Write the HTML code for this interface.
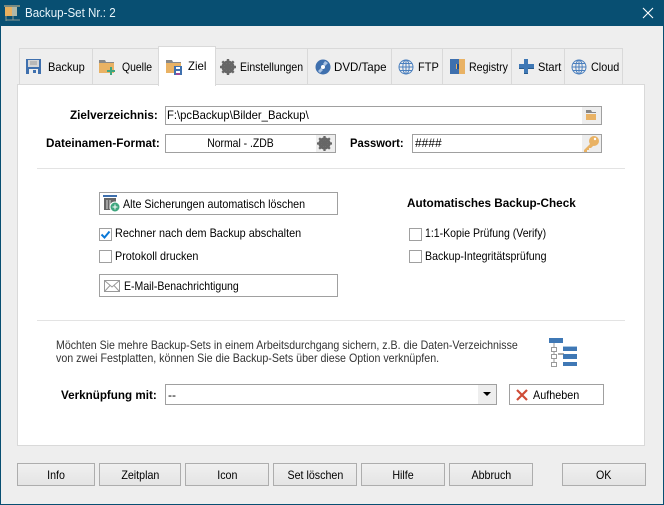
<!DOCTYPE html>
<html><head><meta charset="utf-8"><style>
*{box-sizing:border-box}
html,body{margin:0;padding:0;width:664px;height:505px;overflow:hidden;background:#eeeeee;font-family:"Liberation Sans",sans-serif;font-size:12px;color:#000}
.abs{position:absolute}
.t{position:absolute;white-space:nowrap;line-height:14px;transform-origin:0 50%}
.tab{position:absolute;top:48px;height:37px;border:1px solid #d9d9d9;border-bottom:0;border-right:0;background:#eee}
.box{position:absolute;background:#fff;border:1px solid #a0a0a0}
.btn{position:absolute;top:463px;height:23px;border:1px solid #adadad;background:linear-gradient(#f0f0f0,#e4e4e4);text-align:center;line-height:22px;white-space:nowrap}
.btn span{display:inline-block;transform:scaleX(.89)}
.cb{position:absolute;width:13px;height:13px;border:1px solid #a0a0a0;background:#fff}
b{font-weight:bold}
svg{position:absolute;display:block}
</style></head><body>
<div class="abs" style="left:0;top:0;width:664px;height:505px;background:#eee;border:1px solid #084f72;border-top:0"></div>
<div class="abs" style="left:0;top:0;width:664px;height:26px;background:#084f72"></div>
<svg style="left:4px;top:5px" width="17" height="17" viewBox="0 0 17 17"><rect x="1" y="2" width="11" height="9" fill="#e8b060"/><rect x="0" y="0" width="16" height="2" fill="#7a8a80"/><rect x="8" y="2" width="5" height="9" fill="#b0b8a8"/><path d="M2 11v5M2 15h14M9 11v4" stroke="#8d9a90" fill="none"/></svg>
<div class="t" style="left:25px;top:5px;color:#e8f4fa;font-size:13px;line-height:16px;transform:scaleX(.89)">Backup-Set Nr.: 2</div>
<svg style="left:642px;top:7px" width="12" height="12" viewBox="0 0 12 12"><path d="M1 1L11 11M11 1L1 11" stroke="#fff" stroke-width="1.1"/></svg>

<!-- tabs -->
<div class="tab" style="left:19px;width:74px"></div>
<div class="tab" style="left:92px;width:67px"></div>
<div class="tab" style="left:215px;width:93px"></div>
<div class="tab" style="left:307px;width:85px"></div>
<div class="tab" style="left:391px;width:52px"></div>
<div class="tab" style="left:442px;width:70px"></div>
<div class="tab" style="left:511px;width:54px"></div>
<div class="tab" style="left:564px;width:59px;border-right:1px solid #d9d9d9"></div>
<!-- panel -->
<div class="abs" style="left:17px;top:84px;width:628px;height:362px;background:#fff;border:1px solid #d9d9d9"></div>
<div class="abs" style="left:158px;top:46px;width:58px;height:40px;background:#fff;border:1px solid #d9d9d9;border-bottom:0"></div>

<!-- tab icons -->
<svg style="left:26px;top:59px" width="16" height="16" viewBox="0 0 16 16"><rect width="15" height="15" fill="#3f70ae"/><rect x="2" y="1" width="11" height="7" fill="#d6d6d6"/><path d="M4 3h7M4 5h7" stroke="#9a9a9a"/><rect x="3" y="10" width="9" height="5" fill="#eee"/><rect x="7" y="11" width="3" height="3" fill="#3f70ae"/></svg>
<svg style="left:99px;top:59px" width="17" height="16" viewBox="0 0 17 16"><path d="M0 1h6l1 2h8v1H0z" fill="#888"/><rect y="4" width="15" height="10" fill="#e9b264"/><path d="M11 8h2v3h3v2h-3v3h-2v-3H8v-2h3z" fill="#3fa67f"/></svg>
<svg style="left:166px;top:59px" width="16" height="16" viewBox="0 0 16 16"><path d="M0 1h6l1 2h8v1H0z" fill="#888"/><rect y="4" width="15" height="10" fill="#e9b264"/><rect x="8" y="7" width="8" height="9" fill="#3f70ae"/><rect x="10" y="8" width="4" height="2" fill="#fff"/><rect x="10" y="12" width="4" height="4" fill="#fff"/><rect x="10" y="14" width="4" height="2" fill="#a04a96"/></svg>
<svg style="left:220px;top:59px" width="16" height="16" viewBox="0 0 16 16"><g stroke="#666" stroke-width="2.4"><path d="M8 0v16M0 8h16M2.3 2.3l11.4 11.4M13.7 2.3L2.3 13.7"/></g><circle cx="8" cy="8" r="5" fill="none" stroke="#666" stroke-width="3"/></svg>
<svg style="left:315px;top:59px" width="16" height="16" viewBox="0 0 16 16"><circle cx="8" cy="8" r="7.5" fill="#3f70ae"/><path d="M10 2l3 2-3 3-2-2zM6 9l2 2-3 3-2-2z" fill="#a9c3e3"/><circle cx="8" cy="8" r="2" fill="#fff"/></svg>
<svg style="left:398px;top:59px" width="16" height="16" viewBox="0 0 16 16"><g fill="none" stroke="#4a7fbe"><circle cx="8" cy="8" r="7"/><ellipse cx="8" cy="8" rx="3.2" ry="7"/><path d="M8 1v14M1 8h14M2 4.5h12M2 11.5h12"/></g></svg>
<svg style="left:450px;top:59px" width="15" height="15" viewBox="0 0 15 15"><rect width="15" height="15" fill="#e9b264"/><path d="M0 0h9v5H6v5h3v5H0z" fill="#3f70ae"/><path d="M7 5h2v5H7z" fill="#1e4f95"/></svg>
<svg style="left:519px;top:59px" width="15" height="15" viewBox="0 0 15 15"><path d="M5 0h4v5h6v5H9v5H5v-5H0V5h5z" fill="#3f78b5"/><path d="M0 9h5v1H0zM9 9h6v1H9zM5 14h4v1H5z" fill="#285a8c"/></svg>
<svg style="left:571px;top:59px" width="16" height="16" viewBox="0 0 16 16"><g fill="none" stroke="#4a7fbe"><circle cx="8" cy="8" r="7"/><ellipse cx="8" cy="8" rx="3.2" ry="7"/><path d="M8 1v14M1 8h14M2 4.5h12M2 11.5h12"/></g></svg>
<!-- tab labels -->
<div class="t" style="left:48px;top:60px;transform:scaleX(.92)">Backup</div>
<div class="t" style="left:122px;top:60px;transform:scaleX(.867)">Quelle</div>
<div class="t" style="left:188px;top:59px;transform:scaleX(.95)">Ziel</div>
<div class="t" style="left:240px;top:60px;transform:scaleX(.875)">Einstellungen</div>
<div class="t" style="left:334px;top:60px;transform:scaleX(.96)">DVD/Tape</div>
<div class="t" style="left:418px;top:60px;transform:scaleX(.92)">FTP</div>
<div class="t" style="left:469px;top:60px;transform:scaleX(.885)">Registry</div>
<div class="t" style="left:538px;top:60px;transform:scaleX(.92)">Start</div>
<div class="t" style="left:591px;top:60px;transform:scaleX(.9)">Cloud</div>

<!-- row 1 -->
<div class="t" style="left:70px;top:108px;transform:scaleX(.975)"><b>Zielverzeichnis:</b></div>
<div class="box" style="left:165px;top:106px;width:437px;height:19px"></div>
<div class="abs" style="left:582px;top:107px;width:19px;height:17px;background:#eee"></div>
<div class="t" style="left:167px;top:108px;transform:scaleX(.94)">F:\pcBackup\Bilder_Backup\</div>
<svg style="left:585px;top:109px" width="12" height="12" viewBox="0 0 12 12"><path d="M1 1h5l1 2h4v1H1z" fill="#888"/><rect x="1" y="5" width="10" height="6" fill="#e9b264"/></svg>
<!-- row 2 -->
<div class="t" style="left:46px;top:136px;transform:scaleX(.975)"><b>Dateinamen-Format:</b></div>
<div class="box" style="left:165px;top:134px;width:171px;height:19px"></div>
<div class="abs" style="left:316px;top:135px;width:19px;height:17px;background:#eee"></div>
<div class="t" style="left:165px;top:136px;width:151px;text-align:center;transform:scaleX(.867);transform-origin:50% 50%">Normal - .ZDB</div>
<svg style="left:317px;top:136px" width="15" height="15" viewBox="0 0 16 16"><g stroke="#666" stroke-width="2.4"><path d="M8 0v16M0 8h16M2.3 2.3l11.4 11.4M13.7 2.3L2.3 13.7"/></g><circle cx="8" cy="8" r="5" fill="none" stroke="#666" stroke-width="3"/></svg>
<div class="t" style="left:350px;top:136px;transform:scaleX(.935)"><b>Passwort:</b></div>
<div class="box" style="left:412px;top:134px;width:190px;height:19px"></div>
<div class="abs" style="left:582px;top:135px;width:19px;height:17px;background:#eee"></div>
<div class="t" style="left:415px;top:136px">####</div>
<svg style="left:583px;top:135px" width="17" height="17" viewBox="0 0 17 17"><circle cx="11" cy="6" r="5" fill="#e9b264"/><circle cx="12" cy="4" r="1.2" fill="#fff"/><path d="M8 8L1 15v2h3v-2h2v-2h2l3-3z" fill="#e9b264"/></svg>
<div class="abs" style="left:37px;top:168px;width:588px;height:1px;background:#e3e3e3"></div>

<!-- left options -->
<div class="box" style="left:99px;top:192px;width:239px;height:23px"></div>
<svg style="left:103px;top:195px" width="18" height="18" viewBox="0 0 18 18"><rect x="0" y="0" width="14" height="2" fill="#3f70ae"/><rect x="1" y="3" width="12" height="12" fill="#666"/><path d="M4 5v9M7 5v9" stroke="#ddd"/><circle cx="12" cy="12" r="5" fill="#3fa67f" stroke="#fff"/><path d="M12 9.500v5M9.500 12h5" stroke="#fff"/></svg>
<div class="t" style="left:123px;top:197px;transform:scaleX(.892)">Alte Sicherungen automatisch löschen</div>
<div class="cb" style="left:99px;top:228px"></div>
<svg style="left:100px;top:229px" width="11" height="11" viewBox="0 0 11 11"><path d="M1.500 5.500L4.500 8.500L9.500 2.500" fill="none" stroke="#0a78d7" stroke-width="2"/></svg>
<div class="t" style="left:115px;top:226px;transform:scaleX(.903)">Rechner nach dem Backup abschalten</div>
<div class="cb" style="left:99px;top:250px"></div>
<div class="t" style="left:115px;top:249px;transform:scaleX(.9)">Protokoll drucken</div>
<div class="box" style="left:99px;top:274px;width:239px;height:23px"></div>
<svg style="left:104px;top:280px" width="16" height="12" viewBox="0 0 16 12"><rect x=".5" y=".5" width="15" height="11" fill="#fff" stroke="#999"/><path d="M.5.5L8 7L15.500.5M.5 11.500L6 5.500M15.500 11.500L10 5.500" fill="none" stroke="#999"/></svg>
<div class="t" style="left:124px;top:279px;transform:scaleX(.878)">E-Mail-Benachrichtigung</div>

<!-- right options -->
<div class="t" style="left:407px;top:196px;transform:scaleX(.977)"><b>Automatisches Backup-Check</b></div>
<div class="cb" style="left:409px;top:228px"></div>
<div class="t" style="left:425px;top:226px;transform:scaleX(.877)">1:1-Kopie Prüfung (Verify)</div>
<div class="cb" style="left:409px;top:250px"></div>
<div class="t" style="left:425px;top:249px;transform:scaleX(.884)">Backup-Integritätsprüfung</div>
<div class="abs" style="left:37px;top:320px;width:588px;height:1px;background:#e3e3e3"></div>

<!-- info -->
<div class="t" style="left:56px;top:338px;color:#333;transform:scaleX(.883)">Möchten Sie mehre Backup-Sets in einem Arbeitsdurchgang sichern, z.B. die Daten-Verzeichnisse</div>
<div class="t" style="left:56px;top:351px;color:#333;transform:scaleX(.889)">von zwei Festplatten, können Sie die Backup-Sets über diese Option verknüpfen.</div>
<svg style="left:549px;top:338px" width="29" height="30" viewBox="0 0 29 30"><rect width="14" height="5" fill="#3f78b5"/><path d="M5 5v21" stroke="#999"/><path d="M9 16h6" stroke="#555"/><rect x="14" y="8" width="14" height="1" fill="#a9c7e2"/><rect x="14" y="9" width="14" height="4" fill="#3f78b5"/><rect x="14" y="16" width="14" height="5" fill="#3f78b5"/><rect x="14" y="24" width="14" height="4" fill="#3f78b5"/><g fill="#fff" stroke="#999"><rect x="2.500" y="9.500" width="5" height="4"/><rect x="2.500" y="16.500" width="5" height="4"/><rect x="2.500" y="24.500" width="5" height="4"/></g></svg>

<div class="t" style="left:61px;top:388px;transform:scaleX(.97)"><b>Verknüpfung mit:</b></div>
<div class="box" style="left:165px;top:384px;width:332px;height:21px"></div>
<div class="abs" style="left:478px;top:385px;width:18px;height:19px;background:#eee"></div>
<svg style="left:483px;top:392px" width="9" height="5" viewBox="0 0 9 5"><path d="M0 0h8L4 4z" fill="#000"/></svg>
<div class="t" style="left:168px;top:388px">--</div>
<div class="box" style="left:509px;top:384px;width:95px;height:21px"></div>
<svg style="left:516px;top:389px" width="12" height="12" viewBox="0 0 12 12"><path d="M1 1L11 11M11 1L1 11" stroke="#cf4b36" stroke-width="2.200"/></svg>
<div class="t" style="left:533px;top:388px;transform:scaleX(.9)">Aufheben</div>

<!-- bottom buttons -->
<div class="btn" style="left:17px;width:78px"><span>Info</span></div>
<div class="btn" style="left:99px;width:82px"><span>Zeitplan</span></div>
<div class="btn" style="left:185px;width:84px"><span>Icon</span></div>
<div class="btn" style="left:273px;width:84px"><span>Set löschen</span></div>
<div class="btn" style="left:361px;width:84px"><span>Hilfe</span></div>
<div class="btn" style="left:449px;width:84px"><span>Abbruch</span></div>
<div class="btn" style="left:562px;width:84px"><span>OK</span></div>
</body></html>
